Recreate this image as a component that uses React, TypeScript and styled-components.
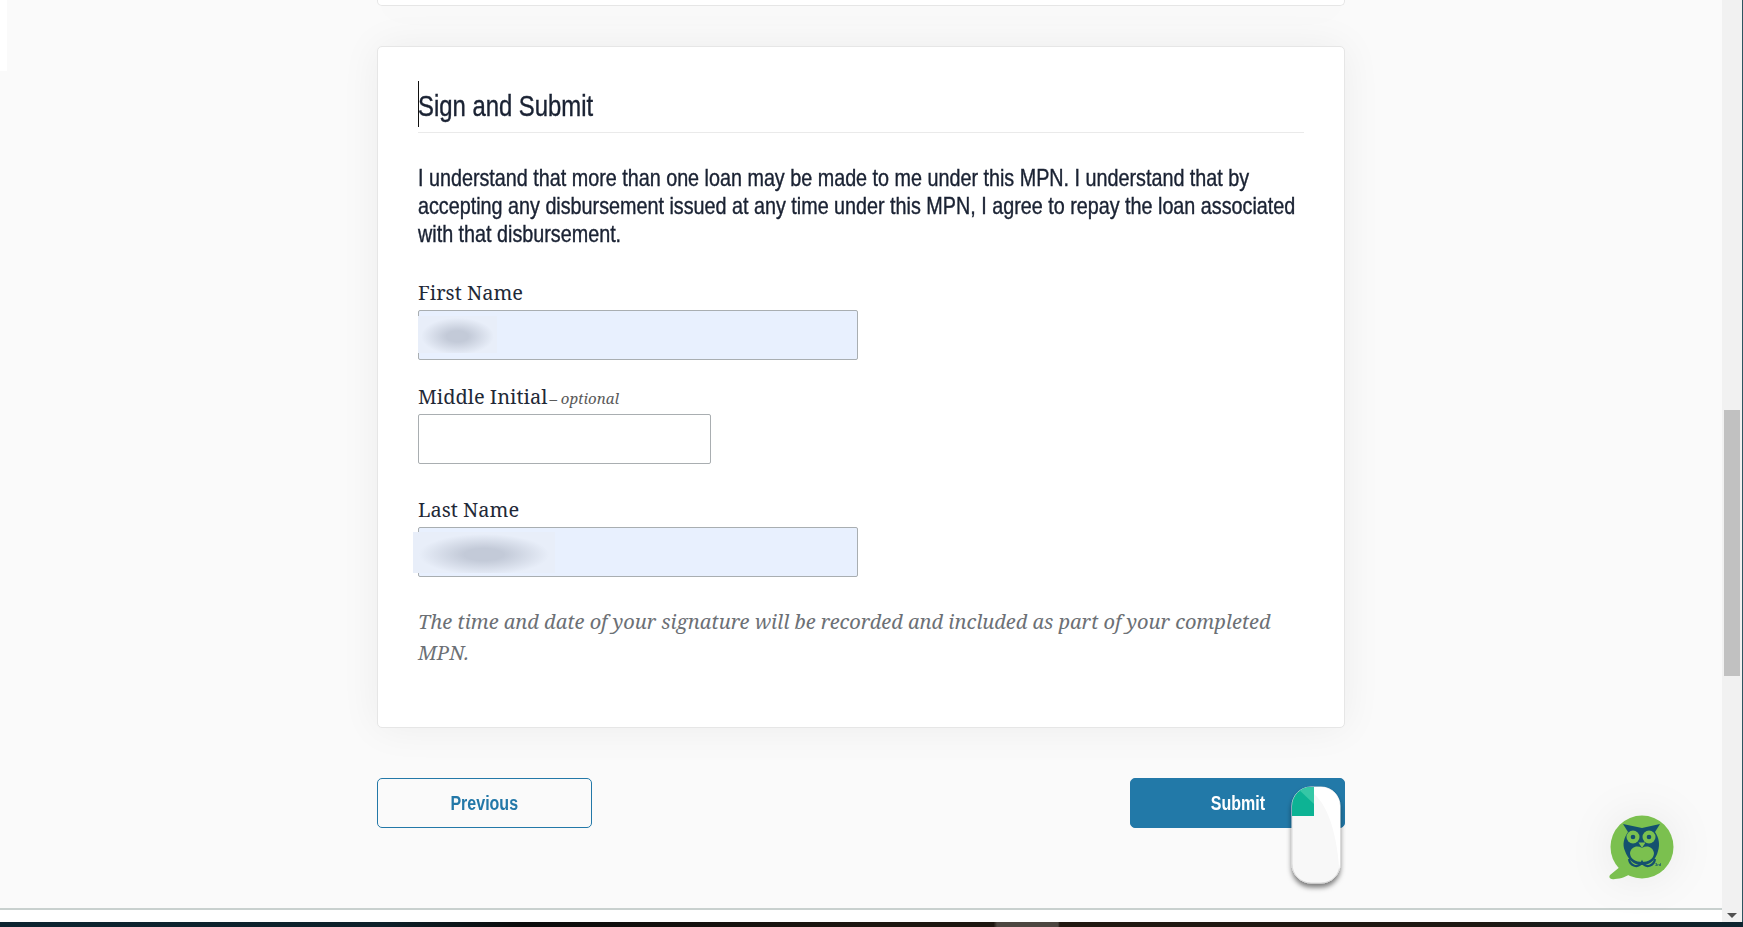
import React from 'react'
import styled, { createGlobalStyle } from 'styled-components'

const GlobalStyle = createGlobalStyle`
  html, body {
    margin: 0;
    padding: 0;
    height: 100%;
    overflow: hidden;
    background: #fafafa;
  }
  * {
    box-sizing: border-box;
  }
`

// no condensed family is installed, so the narrow text is squeezed horizontally
const narrow = `"Liberation Sans", Arimo, sans-serif`
const serif = `"Noto Serif", "DejaVu Serif", "Liberation Serif", serif`
const squeeze = 0.823

const Screen = styled.div`
  position: relative;
  width: 1743px;
  height: 927px;
  display: flex;
  flex-direction: column;
  overflow: hidden;
`
const Viewport = styled.div`
  flex: 1;
  min-height: 0;
  display: flex;
`
const Page = styled.div`
  flex: 1;
  min-width: 0;
  display: flex;
  flex-direction: column;
`
const Content = styled.main`
  flex: 1;
  background: #fafafa;
  padding-left: 377px;
`
const Card = styled.section`
  width: 968px;
  background: #fff;
  border: 1px solid #e6e6e6;
  border-radius: 5px;
  box-shadow: 0 0 40px rgba(0, 0, 0, 0.06);
`
const StubCard = styled(Card)`
  height: 6px;
  border-top: 0;
  border-radius: 0 0 5px 5px;
`
const FormCard = styled(Card)`
  height: 682px;
  margin-top: 40px;
  padding: 34px 40px 0;
`
const Heading = styled.h2`
  margin: 0;
  height: 52px;
  font: 400 29px/50px ${narrow};
  color: #1a2233;
  border-bottom: 1px solid #eaeaea;
  position: relative;
  &::before {
    content: '';
    position: absolute;
    left: 0;
    top: 0;
    width: 1px;
    height: 46px;
    background: #111;
  }
`
const Squeezed = styled.span`
  display: inline-block;
  transform: scaleX(${squeeze});
  transform-origin: left center;
  -webkit-text-stroke: 0.4px currentColor;
`
const Lead = styled.p`
  margin: 31px 0 0;
  width: ${888 / squeeze}px;
  font: 400 24px/28px ${narrow};
  color: #1a2233;
  transform: scaleX(${squeeze});
  transform-origin: left top;
  -webkit-text-stroke: 0.4px currentColor;
`
const Field = styled.div<{ $gap: number }>`
  margin-top: ${p => p.$gap}px;
`
const Label = styled.label`
  display: block;
  height: 34px;
  font: 400 20px/34px ${serif};
  color: #1f2937;
`
const Optional = styled.em`
  font-size: 15px;
  line-height: 1;
  color: #5a5a5a;
  margin-left: 2px;
`
const InputBox = styled.div<{ $width: number; $filled?: boolean }>`
  position: relative;
  width: ${p => p.$width}px;
  height: 50px;
  border: 1px solid #a9aeb1;
  border-radius: 2px;
  background: ${p => (p.$filled ? '#e8f0fe' : '#fff')};
`
const Redaction = styled.div<{ $left: number; $top: number; $width: number; $height: number }>`
  position: absolute;
  left: ${p => p.$left}px;
  top: ${p => p.$top}px;
  width: ${p => p.$width}px;
  height: ${p => p.$height}px;
  background: radial-gradient(ellipse 46% 50% at 50% 55%, #c3cad8 30%, rgba(195, 202, 216, 0) 100%), #e8eef9;
`
const Note = styled.p`
  margin: 29px 0 0;
  font: italic 400 20px/31px ${serif};
  color: #6c7075;
`
const Actions = styled.div`
  width: 968px;
  margin-top: 50px;
  display: flex;
  justify-content: space-between;
`
const NavButton = styled.button<{ $primary?: boolean }>`
  width: 215px;
  height: 50px;
  border: 1px solid #2378a8;
  border-radius: 5px;
  background: ${p => (p.$primary ? '#2279a8' : 'transparent')};
  color: ${p => (p.$primary ? '#fff' : '#2378a8')};
  font: 700 20px/1 ${narrow};
  padding: 0;
`
const ButtonLabel = styled.span`
  display: inline-block;
  transform: scaleX(0.8);
`
const FooterBand = styled.div`
  height: 14px;
  background: #fff;
  border-top: 2px solid #c8d0ce;
`
const Scrollbar = styled.div`
  width: 21px;
  background: #f1f1f1;
  display: flex;
  flex-direction: column;
  align-items: stretch;
  padding: 410px 2px 0;
  position: relative;
  border-right: 1px solid #2d5560;
`
const Thumb = styled.div`
  height: 266px;
  background: #c1c1c1;
`
const ScrollArrow = styled.div`
  position: absolute;
  left: 5px;
  bottom: 4px;
  width: 0;
  height: 0;
  border-left: 5px solid transparent;
  border-right: 5px solid transparent;
  border-top: 5px solid #505050;
`
const Taskbar = styled.div`
  height: 5px;
  background: linear-gradient(90deg, #0c2430 0%, #0d2029 22%, #0b0b0b 30%, #1d1610 50%, #1d1610 57%, #4c4640 57.2%, #4c4640 60.7%, #211811 60.8%, #1e1812 85%, #0d2530 100%);
`
const EdgeStrip = styled.div`
  position: absolute;
  left: 0;
  top: 0;
  width: 7px;
  height: 71px;
  background: #fff;
`
const MouseMark = styled.svg`
  position: absolute;
  left: 1286px;
  top: 782px;
  pointer-events: none;
`
const OwlBadge = styled.svg`
  position: absolute;
  left: 1605px;
  top: 812px;
  overflow: visible;
  filter: drop-shadow(0 0 22px rgba(0, 0, 0, 0.07));
`

function MouseCursor() {
  return (
    <MouseMark width="60" height="116" viewBox="0 0 60 116">
      <defs>
        <filter id="mouse-shadow" x="-30%" y="-20%" width="160%" height="140%">
          <feDropShadow dx="0" dy="4" stdDeviation="2.5" floodColor="#000" floodOpacity="0.5" />
        </filter>
        <clipPath id="mouse-shape">
          <rect x="6" y="5" width="48" height="96" rx="19" />
        </clipPath>
      </defs>
      <rect x="6" y="5" width="48" height="96" rx="19" fill="#f8f8f8" stroke="#dcdcdc" filter="url(#mouse-shadow)" />
      <g clipPath="url(#mouse-shape)">
        <path d="M28 5H54V101C53 60 44 25 28 12Z" fill="#fff" />
        <rect x="6" y="5" width="22" height="29" fill="#0db394" />
        <path d="M10 5H28V22Z" fill="#35c7a6" />
      </g>
    </MouseMark>
  )
}

function Owl() {
  return (
    <OwlBadge width="70" height="70" viewBox="0 0 70 70">
      <circle cx="37" cy="35" r="31.5" fill="#7bc04f" />
      <path d="M16 54L5 63C3 66 6 68 10 67C16 67 22 64 27 61Z" fill="#7bc04f" />
      <path d="M18 12L37 16L55 12L50 20C54 26 55 32 53 39C51 47 46 53 37 53C28 53 23 47 20 39C17 32 19 26 23 20Z" fill="#14506f" />
      <circle cx="28" cy="25" r="6.5" fill="#7bc04f" />
      <circle cx="44" cy="25" r="6.5" fill="#7bc04f" />
      <circle cx="28" cy="25" r="2.3" fill="#14506f" />
      <circle cx="44" cy="25" r="2.3" fill="#14506f" />
      <path d="M33.5 30.5H40.5L37 36Z" fill="#7bc04f" />
      <path d="M37 36C42 33 48 35 49 41C49 47 43 50 37 50C31 50 25 47 25 41C26 35 32 33 37 36Z" fill="#7bc04f" />
      <path d="M24 47C25 54 33 57 37 50C41 57 49 54 50 47" fill="none" stroke="#14506f" strokeWidth="2.2" />
      <text x="50" y="54" fontSize="4" fontFamily="Liberation Sans, sans-serif" fontWeight="700" fill="#14506f">3rd</text>
    </OwlBadge>
  )
}

export default function App() {
  return (
    <Screen>
      <GlobalStyle />
      <Viewport>
        <Page>
          <Content>
            <StubCard />
            <FormCard>
              <Heading>
                <Squeezed>Sign and Submit</Squeezed>
              </Heading>
              <Lead>
                I understand that more than one loan may be made to me under this MPN. I understand that by
                accepting any disbursement issued at any time under this MPN, I agree to repay the loan associated
                with that disbursement.
              </Lead>
              <Field $gap={28}>
                <Label>First Name</Label>
                <InputBox $width={440} $filled>
                  <Redaction $left={-1} $top={5} $width={79} $height={37} />
                </InputBox>
              </Field>
              <Field $gap={20}>
                <Label>
                  Middle Initial<Optional>– optional</Optional>
                </Label>
                <InputBox $width={293} />
              </Field>
              <Field $gap={29}>
                <Label>Last Name</Label>
                <InputBox $width={440} $filled>
                  <Redaction $left={-6} $top={4} $width={142} $height={41} />
                </InputBox>
              </Field>
              <Note>
                The time and date of your signature will be recorded and included as part of your completed MPN.
              </Note>
            </FormCard>
            <Actions>
              <NavButton>
                <ButtonLabel>Previous</ButtonLabel>
              </NavButton>
              <NavButton $primary>
                <ButtonLabel>Submit</ButtonLabel>
              </NavButton>
            </Actions>
          </Content>
          <FooterBand />
        </Page>
        <Scrollbar>
          <Thumb />
          <ScrollArrow />
        </Scrollbar>
      </Viewport>
      <Taskbar />
      <EdgeStrip />
      <MouseCursor />
      <Owl />
    </Screen>
  )
}
